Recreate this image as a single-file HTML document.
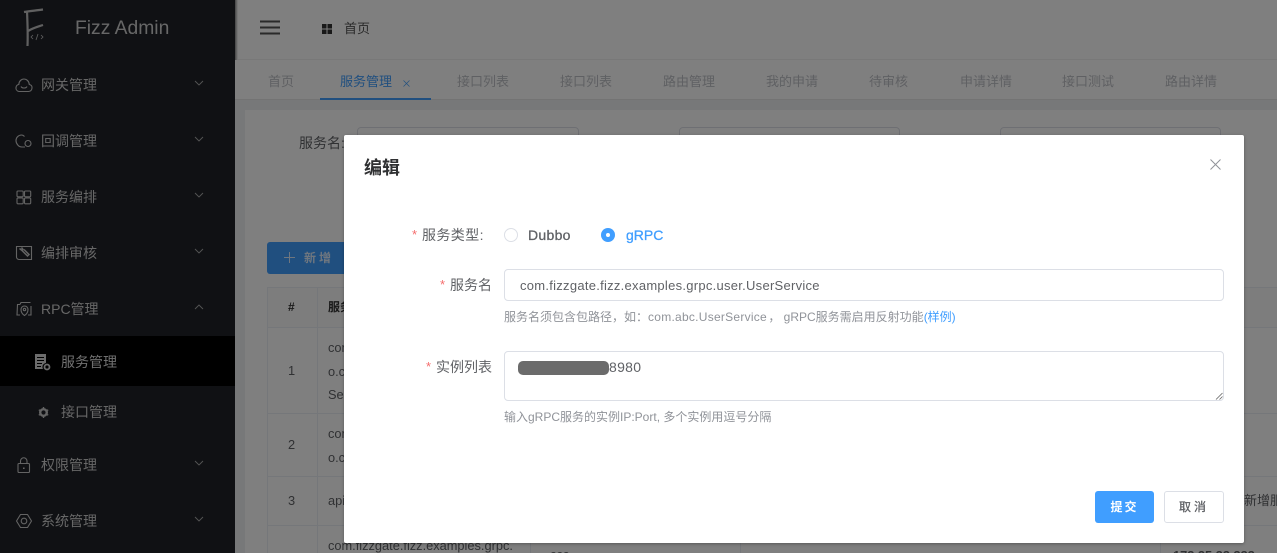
<!DOCTYPE html>
<html><head><meta charset="utf-8">
<style>
*{box-sizing:border-box}
html,body{margin:0;padding:0;width:1277px;height:553px;overflow:hidden;background:#eef0f3;font-family:"Liberation Sans","Noto Sans CJK SC",sans-serif;color:#606266}
div,span,svg{position:absolute;white-space:nowrap}
#root{left:0;top:0;width:1277px;height:553px;overflow:hidden;background:#eef0f3}
#side{left:0;top:0;width:235px;height:553px;background:#202329}
.mi{left:41px;font-size:14px;line-height:20px;color:#cfcfcf}
.ar{left:194px;width:10px;height:6px}
.ic{left:15px;width:18px;height:18px;fill:none;stroke:#c8c8c8;stroke-width:1.1}
#head{left:235px;top:0;width:1042px;height:60px;background:#fff;border-bottom:1px solid #f0f0f0}
#tabs{left:235px;top:60px;width:1042px;height:40px;background:#fff;border-bottom:1px solid #e6e6e6}
.t{top:12px;font-size:13px;line-height:20px;color:#bfc1c6}
#card{left:245px;top:110px;width:1032px;height:443px;background:#fff}
.inp{top:127px;height:40px;border:1px solid #dcdfe6;border-radius:4px;background:#fff}
.hl{height:1px;background:#ebeef5}
.vl{width:1px;background:#ebeef5}
.c{font-size:12.8px;line-height:23px;color:#606266}
#ov{left:0;top:0;width:1277px;height:553px;background:rgba(0,0,0,.5)}
#m{left:344px;top:135px;width:900px;height:408px;background:#fff;border-radius:2px;box-shadow:0 1px 3px rgba(0,0,0,.3)}
.l{font-size:14px;line-height:20px;color:#606266}
.s{color:#f56c6c;font-size:14px;line-height:20px}
.h{font-size:12px;line-height:17px;color:#909399}
.med{-webkit-text-stroke:.3px currentColor}
</style></head><body>
<div id="root">
<div id="side">
 <svg style="left:22px;top:8px;width:28px;height:40px" viewBox="0 0 28 40" fill="none" stroke="#c0c0c0"><path d="M2 4C8 3 14 2.500 21 1.500M5 3C5.500 14 6 26 5.500 38M6 23C11 20 15 19 21 17" stroke-width="2.200"/><path d="M11 27l-2 2 2 2M14 32l2-6M19 27l2 2-2 2" stroke-width=".8"/></svg>
 <div style="left:75px;top:16px;font-size:19.300px;line-height:26px;color:#cfcfcf">Fizz Admin</div>
 <svg class="ic" style="top:76px" viewBox="0 0 18 18"><path d="M4 15.500C1.500 15 .8 13 1 11.500C1.200 9.800 2.500 8.700 3.800 8.500C4 5 6.500 3 9 3s5 2 5.300 5.500C16 8.800 17.200 10 17 12c-.2 2-1.500 3.400-3.500 3.500z"/><path d="M6 10.500C7 12.500 11 12.500 12 10.500"/></svg>
 <div class="mi" style="top:75px">网关管理</div>
 <svg class="ic" style="top:132px" viewBox="0 0 18 18"><path d="M9.500 4.500C8.600 3.500 7.500 3 6.500 3 3.500 3 1 5.500 1 8.500S3.500 15 6.800 15H10"/><circle cx="13" cy="11.500" r="3"/></svg>
 <div class="mi" style="top:131px">回调管理</div>
 <svg class="ic" style="top:188px" viewBox="0 0 18 18"><rect x="2" y="3" width="6.200" height="5.800" rx="1"/><rect x="9.500" y="3" width="6.200" height="5.800" rx="1"/><rect x="2" y="10" width="6.200" height="5.800" rx="1"/><rect x="9.500" y="10" width="6.200" height="5.800" rx="1"/></svg>
 <div class="mi" style="top:187px">服务编排</div>
 <svg class="ic" style="top:244px" viewBox="0 0 18 18"><path d="M1.500 2.500h15v13H4a2.500 2.500 0 0 1-2.500-2.500z"/><path d="M4.500 4.500l2.500 2 1-1-1.500-2M7 6.500l5.500 5.500 1.500-1.500L9 5.500" stroke-width="1.500"/></svg>
 <div class="mi" style="top:243px">编排审核</div>
 <svg class="ic" style="top:300px" viewBox="0 0 18 18"><path d="M5 4.500H2.500L2 15h3M5 4.500L6 2.500h9.500M16 6V15h-3"/><path d="M9.500 15.500c-2.500-1.500-3.500-3.500-3.500-6a3.500 3.500 0 0 1 7 0c0 2.500-1 4.500-3.500 6z"/><circle cx="9.500" cy="9.500" r="1.200"/></svg>
 <div class="mi" style="top:299px">RPC管理</div>
 <div style="left:0;top:336px;width:235px;height:50px;background:#000"></div>
 <svg style="left:35px;top:354px;width:16px;height:17px" viewBox="0 0 16 17" fill="#d8d8d8"><path d="M0 0h11v9a4 4 0 0 0-3 6H0zM2 3v1h7V3zM2 6v1h7V6zM2 9v1h5V9zM2 12v1h4v-1z" fill-rule="evenodd"/><circle cx="12" cy="13" r="2.500" fill="none" stroke="#d8d8d8" stroke-width="1.800"/></svg>
 <div class="mi" style="left:61px;top:352px;color:#e0e0e0">服务管理</div>
 <svg style="left:38px;top:407px;width:11px;height:11px" viewBox="0 0 11 11"><circle cx="5.500" cy="5.500" r="3.300" fill="none" stroke="#c8c8c8" stroke-width="2.400"/><path d="M5.500 0v2M5.500 9v2M.8 2.800l1.700 1M8.500 7.200l1.700 1M.8 8.200l1.700-1M8.500 3.800l1.700-1" stroke="#c8c8c8" stroke-width="1.400"/></svg>
 <div class="mi" style="left:61px;top:402px">接口管理</div>
 <svg class="ic" style="top:456px" viewBox="0 0 18 18"><rect x="3" y="7.500" width="11.500" height="9" rx="1"/><path d="M5.500 7.500V5a3.200 3.200 0 0 1 6.500 0v2.500"/><path d="M8.800 11.500v1.500" stroke-width="1.600"/></svg>
 <div class="mi" style="top:455px">权限管理</div>
 <svg class="ic" style="top:512px" viewBox="0 0 18 18"><path d="M5.500 2.500h7L16.500 9l-4 6.500h-7L1.500 9z" stroke-linejoin="round"/><circle cx="9" cy="9" r="2.800"/></svg>
 <div class="mi" style="top:511px">系统管理</div>
 <svg class="ar" style="top:80px" viewBox="0 0 10 6" fill="none" stroke="#aaa" stroke-width=".9"><path d="M1 1l4 4 4-4"/></svg>
 <svg class="ar" style="top:136px" viewBox="0 0 10 6" fill="none" stroke="#aaa" stroke-width=".9"><path d="M1 1l4 4 4-4"/></svg>
 <svg class="ar" style="top:192px" viewBox="0 0 10 6" fill="none" stroke="#aaa" stroke-width=".9"><path d="M1 1l4 4 4-4"/></svg>
 <svg class="ar" style="top:248px" viewBox="0 0 10 6" fill="none" stroke="#aaa" stroke-width=".9"><path d="M1 1l4 4 4-4"/></svg>
 <svg class="ar" style="top:304px" viewBox="0 0 10 6" fill="none" stroke="#aaa" stroke-width=".9"><path d="M1 5l4-4 4 4"/></svg>
 <svg class="ar" style="top:460px" viewBox="0 0 10 6" fill="none" stroke="#aaa" stroke-width=".9"><path d="M1 1l4 4 4-4"/></svg>
 <svg class="ar" style="top:516px" viewBox="0 0 10 6" fill="none" stroke="#aaa" stroke-width=".9"><path d="M1 1l4 4 4-4"/></svg>
</div>
<div id="head">
 <div style="left:0;top:0;width:3px;height:60px;background:linear-gradient(90deg,#888,#fff)"></div>
 <svg style="left:25px;top:20px;width:20px;height:15px" viewBox="0 0 20 15" stroke="#555" stroke-width="2"><path d="M0 1.500h20M0 7.500h20M0 13.500h20"/></svg>
 <svg style="left:87px;top:24px;width:10px;height:10px" viewBox="0 0 10 10" fill="#333"><rect width="4.500" height="4.500"/><rect x="5.500" width="4.500" height="4.500"/><rect y="5.500" width="4.500" height="4.500"/><rect x="5.500" y="5.500" width="4.500" height="4.500"/></svg>
 <div style="left:109px;top:19px;font-size:13px;line-height:20px;color:#555">首页</div>
</div>
<div id="tabs">
 <div class="t" style="left:33px">首页</div>
 <div class="t" style="left:105px;color:#409eff">服务管理</div>
 <svg style="left:168px;top:20px;width:7px;height:7px" viewBox="0 0 7 7" stroke="#409eff" stroke-width=".7"><path d="M.5.500l6 6M6.500.500l-6 6"/></svg>
 <div style="left:85px;top:38px;width:111px;height:2px;background:#409eff"></div>
 <div class="t" style="left:222px">接口列表</div>
 <div class="t" style="left:325px">接口列表</div>
 <div class="t" style="left:428px">路由管理</div>
 <div class="t" style="left:531px">我的申请</div>
 <div class="t" style="left:634px">待审核</div>
 <div class="t" style="left:725px">申请详情</div>
 <div class="t" style="left:827px">接口测试</div>
 <div class="t" style="left:930px">路由详情</div>
</div>
<div id="card"></div>
<div style="left:299px;top:133px;font-size:14px;line-height:20px;color:#606266">服务名:</div>
<div class="inp" style="left:357px;width:222px"></div>
<div class="inp" style="left:679px;width:221px"></div>
<div class="inp" style="left:1000px;width:221px"></div>
<div style="left:267px;top:242px;width:90px;height:32px;background:#409eff;border-radius:3px"></div>
<svg style="left:284px;top:252px;width:11px;height:11px" viewBox="0 0 11 11" stroke="#dcecff"><path d="M5.500 0v11M0 5.500h11"/></svg>
<div style="left:304px;top:247px;font-size:12px;line-height:22px;color:#dcecff;font-weight:700;letter-spacing:3px">新增</div>
<div style="left:267px;top:287px;width:1010px;height:40px;background:#fafafa"></div>
<div class="hl" style="left:267px;top:287px;width:1010px"></div>
<div class="hl" style="left:267px;top:327px;width:1010px"></div>
<div class="hl" style="left:267px;top:413px;width:1010px"></div>
<div class="hl" style="left:267px;top:476px;width:1010px"></div>
<div class="hl" style="left:267px;top:525px;width:1010px"></div>
<div class="vl" style="left:267px;top:287px;height:266px"></div>
<div class="vl" style="left:317px;top:287px;height:266px"></div>
<div class="vl" style="left:530px;top:525px;height:28px"></div>
<div class="vl" style="left:740px;top:525px;height:28px"></div>
<div class="vl" style="left:1160px;top:287px;height:266px"></div>
<div style="left:288px;top:298px;font-size:12px;line-height:18px;font-weight:700;color:#333">#</div>
<div style="left:328px;top:298px;font-size:12px;line-height:18px;font-weight:700;color:#333">服务</div>
<div class="c" style="left:288px;top:359px">1</div>
<div class="c" style="left:328px;top:336px">com</div>
<div class="c" style="left:328px;top:360px">o.c</div>
<div class="c" style="left:328px;top:383px">Ser</div>
<div class="c" style="left:288px;top:433px">2</div>
<div class="c" style="left:328px;top:422px">com</div>
<div class="c" style="left:328px;top:446px">o.c</div>
<div class="c" style="left:288px;top:489px">3</div>
<div class="c" style="left:328px;top:489px">api</div>
<div class="c" style="left:328px;top:534px">com.fizzgate.fizz.examples.grpc.</div>
<div class="c" style="left:550px;top:543px">ccc</div>
<div class="c" style="left:1244px;top:489px;font-size:13px">新增服</div>
<div class="c" style="left:1173px;top:544px;font-weight:700">172.25.33.333</div>
<div id="ov"></div>
<div id="m">
 <div style="left:20px;top:21px;font-size:18px;line-height:24px;font-weight:700;color:#303133">编辑</div>
 <svg style="left:866px;top:24px;width:11px;height:11px" viewBox="0 0 11 11" stroke="#909399"><path d="M.5.500l10 10M10.500.500l-10 10"/></svg>
 <div class="s" style="left:68px;top:90px;font-size:13px">*</div>
 <div class="l" style="left:78px;top:90px;letter-spacing:.4px">服务类型:</div>
 <div style="left:160px;top:93px;width:14px;height:14px;border:1px solid #dcdfe6;border-radius:50%"></div>
 <div class="med" style="left:184px;top:90px;font-size:14px;line-height:20px;color:#606266;letter-spacing:.3px">Dubbo</div>
 <div style="left:257px;top:93px;width:14px;height:14px;background:#409eff;border-radius:50%"></div>
 <div style="left:262px;top:98px;width:4px;height:4px;background:#fff;border-radius:50%"></div>
 <div class="med" style="left:282px;top:90px;font-size:14px;line-height:20px;color:#409eff">gRPC</div>
 <div class="s" style="left:96px;top:140px;font-size:13px">*</div>
 <div class="l" style="left:106px;top:140px">服务名</div>
 <div style="left:160px;top:134px;width:720px;height:32px;border:1px solid #dcdfe6;border-radius:4px"></div>
 <div style="left:176px;top:141px;font-size:13px;line-height:20px;color:#606266;letter-spacing:.27px">com.fizzgate.fizz.examples.grpc.user.UserService</div>
 <div class="h" style="left:160px;top:174px">服务名须包含包路径，如：<span style="position:static;letter-spacing:.26px">com.abc.UserService</span><span style="position:static;margin-left:-2px"> ， gRPC服务需启用反射功能</span><span style="position:static;color:#409eff">(样例)</span></div>
 <div class="s" style="left:82px;top:222px;font-size:13px">*</div>
 <div class="l" style="left:92px;top:222px">实例列表</div>
 <div style="left:160px;top:216px;width:720px;height:50px;border:1px solid #dcdfe6;border-radius:4px"></div>
 <div style="left:174px;top:226px;width:91px;height:14px;background:#6b6b6b;border-radius:5px"></div>
 <div style="left:265px;top:222px;font-size:14px;line-height:20px;color:#606266;letter-spacing:.3px">8980</div>
 <svg style="left:871px;top:257px;width:8px;height:8px" viewBox="0 0 8 8" stroke="#666" stroke-width=".8"><path d="M1 7.500L7.500 1M4.500 7.500L7.500 4.500"/></svg>
 <div class="h" style="left:160px;top:274px">输入gRPC服务的实例IP:Port, 多个实例用逗号分隔</div>
 <div style="left:751px;top:356px;width:59px;height:32px;background:#409eff;border-radius:3px;color:#fff;font-size:12px;line-height:32px;text-align:center;font-weight:700;letter-spacing:2px">提交</div>
 <div class="med" style="left:820px;top:356px;width:60px;height:32px;border:1px solid #dcdfe6;border-radius:3px;color:#606266;font-size:12px;line-height:30px;text-align:center;letter-spacing:3px">取消</div>
</div>
</div>
</body></html>
